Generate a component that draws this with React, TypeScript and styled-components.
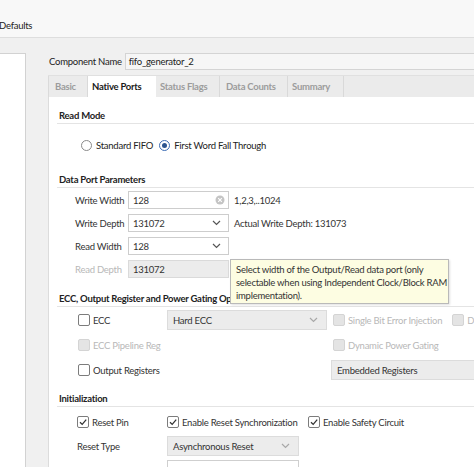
import React from "react";
import styled, { createGlobalStyle } from "styled-components";

const GlobalStyle = createGlobalStyle`
  html, body { margin: 0; padding: 0; }
  body {
    background: #f0f0f0;
    font-family: Lato, "Open Sans", sans-serif;
    font-size: 9.5px;
    letter-spacing: -0.25px;
    color: #222;
    overflow: hidden;
  }
  * { box-sizing: border-box; }
`;

const Page = styled.div`
  width: 474px;
  height: 467px;
  overflow: hidden;
  display: flex;
  flex-direction: column;
`;

const TopBar = styled.div`
  height: 38px;
  flex: none;
  background: #f8f8f8;
  border-bottom: 1px solid #dedede;
  padding-top: 19px;
  line-height: 14px;
  margin-left: -1px;
`;

const Body = styled.div`
  flex: 1;
  display: flex;
  padding-top: 15px;
  min-height: 0;
`;

const LeftPanel = styled.div`
  width: 26px;
  flex: none;
  background: #fff;
  border: 1px solid #d2d2d2;
  border-left: none;
  border-bottom: none;
`;

const Main = styled.div`
  flex: 1;
  margin-left: 22px;
  display: flex;
  flex-direction: column;
  min-width: 0;
`;

const NameRow = styled.div`
  display: flex;
  align-items: center;
  height: 17px;
  gap: 3px;
  padding-left: 1px;
  white-space: nowrap;
`;

const NameField = styled.div`
  flex: 1;
  height: 17px;
  background: #f6f6f6;
  border: 1px solid #d4d4d4;
  border-right: none;
  padding: 0 3px;
  line-height: 15px;
`;

const TabBar = styled.div`
  margin-top: 5px;
  height: 22px;
  flex: none;
  background: #ebebeb;
  display: flex;
  border-top: 1px solid #e0e0e0;
`;

const Tab = styled.div<{ $active?: boolean; $w: number; $pl: number }>`
  width: ${(p) => p.$w}px;
  padding-left: ${(p) => p.$pl}px;
  display: flex;
  align-items: center;
  font-weight: bold;
  white-space: nowrap;
  color: ${(p) => (p.$active ? "#1a1a1a" : "#9c9c9c")};
  background: ${(p) => (p.$active ? "#fff" : "transparent")};
  border-right: 1px solid ${(p) => (p.$active ? "#fff" : "#d9d9d9")};
  &:first-child {
    border-left: 1px solid #dadada;
  }
`;

const Content = styled.div`
  flex: 1;
  background: #fff;
  border-left: 1px solid #dcdcdc;
  position: relative;
  padding-top: 12px;
  white-space: nowrap;
`;

const Section = styled.div<{ $mt?: number }>`
  margin-top: ${(p) => p.$mt ?? 0}px;
  padding-left: 8px;
`;

const SectionHeader = styled.div`
  font-weight: bold;
  line-height: 14px;
  padding-left: 2px;
  border-bottom: 1px solid #e4e4e4;
  overflow: hidden;
`;

const RadioRow = styled.div`
  margin-top: 12px;
  height: 18px;
  padding-left: 24px;
  display: flex;
  align-items: center;
  gap: 6px;
`;

const RadioLabel = styled.label`
  display: flex;
  align-items: center;
  gap: 4px;
`;

const RadioCircle = styled.span<{ $on?: boolean }>`
  width: 11px;
  height: 11px;
  border-radius: 50%;
  border: 1px solid ${(p) => (p.$on ? "#3c6db5" : "#8a8a8a")};
  background: #fff;
  display: flex;
  align-items: center;
  justify-content: center;
  &::after {
    content: "";
    width: 5px;
    height: 5px;
    border-radius: 50%;
    background: ${(p) => (p.$on ? "#2d5590" : "transparent")};
  }
`;

const DataGrid = styled.div`
  margin-top: 3px;
  padding-left: 18px;
  display: grid;
  grid-template-columns: 48px 101px auto;
  grid-auto-rows: 18px;
  row-gap: 5px;
  column-gap: 5px;
  align-items: center;
`;

const FieldLabel = styled.span<{ $disabled?: boolean }>`
  color: ${(p) => (p.$disabled ? "#b8b8b8" : "#333")};
`;

const Input = styled.div<{ $disabled?: boolean }>`
  height: 18px;
  border: 1px solid ${(p) => (p.$disabled ? "#dadada" : "#cdcdcd")};
  background: ${(p) => (p.$disabled ? "#ececec" : "#fff")};
  padding: 0 7px 0 4px;
  display: flex;
  align-items: center;
  justify-content: space-between;
  color: #333;
`;

const ClearWrap = styled.span`
  display: flex;
  margin-right: -4px;
`;

const Select = styled.div<{ $gray?: boolean; $w?: number }>`
  height: 20px;
  width: ${(p) => (p.$w ? `${p.$w}px` : "auto")};
  border: 1px solid ${(p) => (p.$gray ? "#dcdcdc" : "#cfcfcf")};
  background: ${(p) => (p.$gray ? "#ececec" : "#fff")};
  padding: 0 8px 0 5px;
  display: flex;
  align-items: center;
  justify-content: space-between;
  color: #333;
`;

const Hint = styled.span`
  color: #333;
`;

const EccGrid = styled.div`
  margin-top: 3px;
  padding-left: 21px;
  display: grid;
  grid-template-columns: 85px 160px auto;
  grid-auto-rows: 20px;
  row-gap: 5px;
  column-gap: 4px;
  align-items: center;
`;

const InitGrid = styled.div`
  margin-top: 5px;
  padding-left: 20px;
  display: grid;
  grid-template-columns: 90px 141px auto;
  grid-auto-rows: 20px;
  row-gap: 4px;
  align-items: center;
`;

const Inline = styled.div`
  display: flex;
  align-items: center;
  gap: 10px;
`;

const CheckLabel = styled.label<{ $disabled?: boolean }>`
  display: flex;
  align-items: center;
  gap: 3px;
  color: ${(p) => (p.$disabled ? "#b8b8b8" : "#333")};
`;

const Box = styled.span<{ $disabled?: boolean }>`
  width: 12px;
  height: 12px;
  border-radius: 2px;
  flex: none;
  border: 1px solid ${(p) => (p.$disabled ? "#d4d4d4" : "#7c7c7c")};
  background: ${(p) => (p.$disabled ? "#e4e4e4" : "#fff")};
  display: flex;
  align-items: center;
  justify-content: center;
`;

const RightPad = styled.div`
  padding-left: 2px;
`;

const Tooltip = styled.div`
  position: absolute;
  left: 181px;
  top: 162px;
  width: 219px;
  height: 45px;
  background: #fdfde2;
  border: 1px solid #b9b9b9;
  box-shadow: 1px 1px 2px rgba(0, 0, 0, 0.12);
  padding: 3px 4px 3px 5px;
  line-height: 13px;
  color: #333;
  white-space: nowrap;
  overflow: hidden;
`;

const Chevron = ({ light }: { light?: boolean }) => (
  <svg width="9" height="6" viewBox="0 0 9 6">
    <path d="M1 1 L4.5 4.5 L8 1" fill="none" stroke={light ? "#a8a8a8" : "#555"} strokeWidth="1.2" />
  </svg>
);

const ClearIcon = () => (
  <ClearWrap>
    <svg width="10" height="10" viewBox="0 0 10 10">
      <circle cx="5" cy="5" r="4.5" fill="#c4c4c4" />
      <path d="M3.2 3.2 L6.8 6.8 M6.8 3.2 L3.2 6.8" stroke="#fff" strokeWidth="1.1" />
    </svg>
  </ClearWrap>
);

const Check = ({ on, disabled }: { on?: boolean; disabled?: boolean }) => (
  <Box $disabled={disabled}>
    {on && (
      <svg width="10" height="10" viewBox="0 0 10 10">
        <path d="M2 5.2 L4.2 7.4 L8.2 2.6" fill="none" stroke="#333" strokeWidth="1.3" />
      </svg>
    )}
  </Box>
);

const CheckItem = ({ label, on, disabled }: { label: string; on?: boolean; disabled?: boolean }) => (
  <CheckLabel $disabled={disabled}>
    <Check on={on} disabled={disabled} />
    <span>{label}</span>
  </CheckLabel>
);

const tabs: { label: string; w: number; pl: number; active?: boolean }[] = [
  { label: "Basic", w: 40, pl: 6 },
  { label: "Native Ports", w: 68, pl: 4 },
  { label: "Status Flags", w: 64, pl: 4 },
  { label: "Data Counts", w: 68, pl: 6 },
  { label: "Summary", w: 56, pl: 4 },
];
tabs[1].active = true;

export default function App() {
  return (
    <Page>
      <GlobalStyle />
      <TopBar>Defaults</TopBar>
      <Body>
        <LeftPanel />
        <Main>
          <NameRow>
            <span>Component Name</span>
            <NameField>fifo_generator_2</NameField>
          </NameRow>
          <TabBar>
            {tabs.map((t) => (
              <Tab key={t.label} $w={t.w} $pl={t.pl} $active={t.active}>
                {t.label}
              </Tab>
            ))}
          </TabBar>
          <Content>
            <Section>
              <SectionHeader>Read Mode</SectionHeader>
              <RadioRow>
                <RadioLabel>
                  <RadioCircle />
                  <span>Standard FIFO</span>
                </RadioLabel>
                <RadioLabel>
                  <RadioCircle $on />
                  <span>First Word Fall Through</span>
                </RadioLabel>
              </RadioRow>
            </Section>

            <Section $mt={19}>
              <SectionHeader>Data Port Parameters</SectionHeader>
              <DataGrid>
                <FieldLabel>Write Width</FieldLabel>
                <Input>
                  <span>128</span>
                  <ClearIcon />
                </Input>
                <Hint>1,2,3,..1024</Hint>

                <FieldLabel>Write Depth</FieldLabel>
                <Input>
                  <span>131072</span>
                  <Chevron />
                </Input>
                <Hint>Actual Write Depth: 131073</Hint>

                <FieldLabel>Read Width</FieldLabel>
                <Input>
                  <span>128</span>
                  <Chevron />
                </Input>
                <span />

                <FieldLabel $disabled>Read Depth</FieldLabel>
                <Input $disabled>
                  <span>131072</span>
                </Input>
                <span />
              </DataGrid>
            </Section>

            <Section $mt={14}>
              <SectionHeader>ECC, Output Register and Power Gating Options</SectionHeader>
              <EccGrid>
                <CheckItem label="ECC" />
                <Select $gray>
                  <span>Hard ECC</span>
                  <Chevron light />
                </Select>
                <RightPad>
                  <Inline>
                    <CheckItem label="Single Bit Error Injection" disabled />
                    <CheckItem label="Double Bit Error Injection" disabled />
                  </Inline>
                </RightPad>

                <CheckItem label="ECC Pipeline Reg" disabled />
                <span />
                <RightPad>
                  <CheckItem label="Dynamic Power Gating" disabled />
                </RightPad>

                <CheckItem label="Output Registers" />
                <span />
                <Select $gray $w={200}>
                  <span>Embedded Registers</span>
                  <Chevron light />
                </Select>
              </EccGrid>
            </Section>

            <Section $mt={12}>
              <SectionHeader>Initialization</SectionHeader>
              <InitGrid>
                <CheckItem label="Reset Pin" on />
                <CheckItem label="Enable Reset Synchronization" on />
                <CheckItem label="Enable Safety Circuit" on />

                <FieldLabel>Reset Type</FieldLabel>
                <Select $gray $w={132}>
                  <span>Asynchronous Reset</span>
                  <Chevron light />
                </Select>
                <span />

                <span />
                <Select $w={132} />
                <span />
              </InitGrid>
            </Section>

            <Tooltip>
              Select width of the Output/Read data port (only
              <br />
              selectable when using Independent Clock/Block RAM
              <br />
              implementation).
            </Tooltip>
          </Content>
        </Main>
      </Body>
    </Page>
  );
}
